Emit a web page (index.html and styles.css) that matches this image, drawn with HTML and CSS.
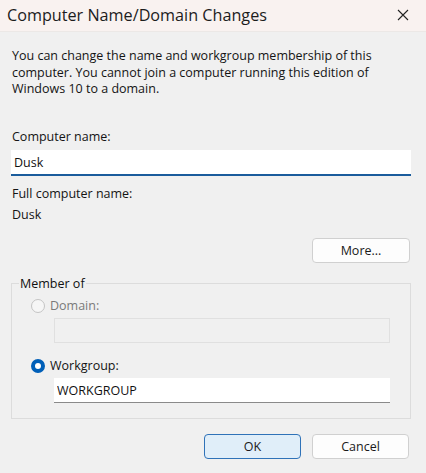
FILE: index.html
```html
<!DOCTYPE html>
<html lang="en">
<head>
	<meta charset="UTF-8">
	<title>Computer Name/Domain Changes</title>
	<link rel="stylesheet" href="styles.css">
</head>
<body>
	<div class="dialog">
		<div class="titlebar">
			<span class="title">Computer Name/Domain Changes</span>
			<span class="close">
				<svg width="12" height="12" viewBox="0 0 12 12"><path d="M1 1L11 11M11 1L1 11" stroke="#222" stroke-width="1.1" fill="none"/></svg>
			</span>
		</div>

		<div class="content">
			<p class="intro">You can change the name and workgroup membership of this computer. You cannot join a computer running this edition of Windows 10 to a domain.</p>

			<label class="label" for="name">Computer name:</label>
			<div class="field focused">
				<input type="text" id="name" value="Dusk">
			</div>

			<div class="label">Full computer name:</div>
			<div class="value">Dusk</div>

			<div class="more-row">
				<button class="btn">More...</button>
			</div>

			<fieldset class="group">
				<legend>Member of</legend>

				<div class="radio-row disabled">
					<span class="radio"></span>
					<span>Domain:</span>
				</div>
				<div class="sub-field disabled-field"></div>

				<div class="radio-row">
					<span class="radio checked"></span>
					<span>Workgroup:</span>
				</div>
				<div class="sub-field">
					<input type="text" value="WORKGROUP">
				</div>
			</fieldset>

			<div class="actions">
				<button class="btn primary">OK</button>
				<button class="btn">Cancel</button>
			</div>
		</div>
	</div>
</body>
</html>
```

FILE: styles.css
```css
body {
	margin: 0;
	padding: 0;
	font-family: "Open Sans", "Noto Sans", sans-serif;
	font-size: 12.5px;
	color: #141414;
	background-color: #f0f0f0;
}

.dialog {
	width: 426px;
	height: 473px;
	background-color: #f0f0f0;
}

.titlebar {
	height: 32px;
	display: flex;
	align-items: center;
	justify-content: space-between;
	background-color: #f9f2f0;
	border-bottom: 1px solid #ece8e6;
	padding: 0 0 0 7px;
	box-sizing: border-box;
}

.title {
	font-size: 16.2px;
	color: #1c1c1c;
	margin-top: -2px;
}

.close {
	width: 46px;
	height: 30px;
	display: flex;
	align-items: center;
	justify-content: center;
	margin-top: -2px;
}

.content {
	padding: 16px 15px 0 11px;
}

.intro {
	margin: 0 0 31.5px 1px;
	line-height: 16.5px;
}

.label {
	display: block;
	margin: 0 0 5px 1px;
	line-height: 16px;
}

.field {
	background: #fff;
	height: 26px;
	box-sizing: border-box;
	border-bottom: 1px solid #8a8a8a;
	margin-bottom: 10px;
}

.field.focused {
	border-bottom: 2px solid #1a5c9c;
}

.field input,
.sub-field input {
	border: none;
	outline: none;
	background: transparent;
	font: inherit;
	color: #111;
	width: 100%;
	height: 100%;
	padding: 0 3px;
	box-sizing: border-box;
}

.value {
	margin: 3px 0 0 1px;
	line-height: 16px;
}

.more-row {
	display: flex;
	justify-content: flex-end;
	margin: 15px 1px 0 0;
}

.btn {
	width: 98px;
	height: 25px;
	font: inherit;
	color: #1a1a1a;
	background: #fdfdfd;
	border: 1px solid #d0d0d0;
	border-radius: 4px;
	padding: 0;
}

.btn.primary {
	background: #e0eef9;
	border-color: #2f72b8;
}

.group {
	margin: 12px 0 0 0;
	padding: 6px 20px 15px 19px;
	border: 1px solid #dcdcdc;
	border-radius: 0;
}

.group legend {
	padding: 0 1px;
	margin-left: -12px;
	color: #111;
}

.radio-row {
	display: flex;
	align-items: center;
	gap: 5px;
	line-height: 16px;
}

.radio-row.disabled {
	color: #7a7a7a;
}

.radio {
	width: 14px;
	height: 14px;
	border-radius: 50%;
	border: 1px solid #c4c4c4;
	background: #f6f6f6;
	box-sizing: border-box;
}

.radio.checked {
	border: 4px solid #005fb8;
	background: #fff;
}

.sub-field {
	margin: 4px 0 0 23px;
	height: 25px;
	background: #fff;
	border-bottom: 1px solid #8a8a8a;
	box-sizing: border-box;
}

.sub-field.disabled-field {
	background: #f0f0f0;
	border: 1px solid #e0e0e0;
	margin-bottom: 15px;
}

.actions {
	display: flex;
	justify-content: flex-end;
	gap: 11px;
	margin: 15px 2px 0 0;
}

.actions .btn {
	width: 97px;
}
```
